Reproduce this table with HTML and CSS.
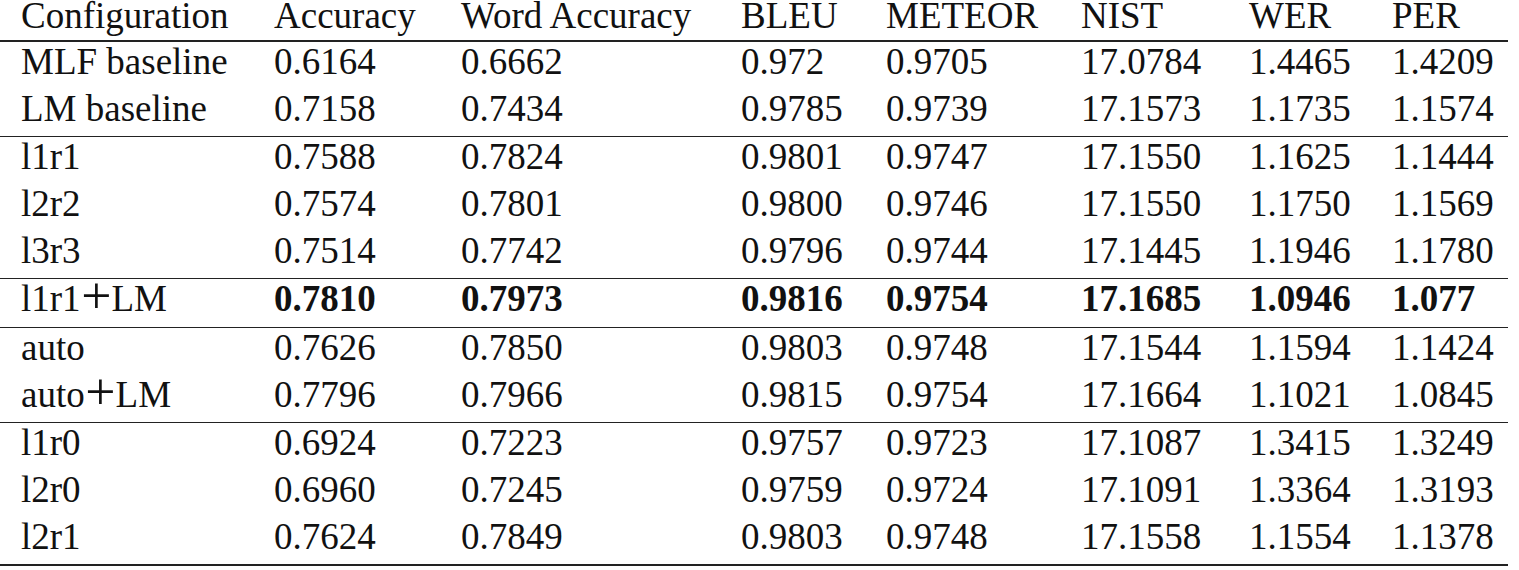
FILE: index.html
```html
<!DOCTYPE html>
<html>
<head>
<meta charset="utf-8">
<link rel="stylesheet" href="styles.css">
</head>
<body>
<table class="results">
  <colgroup>
    <col class="c1"><col class="c2"><col class="c3"><col class="c4"><col class="c5"><col class="c6"><col class="c7"><col class="c8">
  </colgroup>
  <thead>
    <tr class="head"><th>Configuration</th><th>Accuracy</th><th>Word Accuracy</th><th>BLEU</th><th>METEOR</th><th>NIST</th><th>WER</th><th>PER</th></tr>
  </thead>
  <tbody>
    <tr><td>MLF baseline</td><td>0.6164</td><td>0.6662</td><td>0.972</td><td>0.9705</td><td>17.0784</td><td>1.4465</td><td>1.4209</td></tr>
    <tr><td>LM baseline</td><td>0.7158</td><td>0.7434</td><td>0.9785</td><td>0.9739</td><td>17.1573</td><td>1.1735</td><td>1.1574</td></tr>
    <tr class="group"><td>l1r1</td><td>0.7588</td><td>0.7824</td><td>0.9801</td><td>0.9747</td><td>17.1550</td><td>1.1625</td><td>1.1444</td></tr>
    <tr><td>l2r2</td><td>0.7574</td><td>0.7801</td><td>0.9800</td><td>0.9746</td><td>17.1550</td><td>1.1750</td><td>1.1569</td></tr>
    <tr><td>l3r3</td><td>0.7514</td><td>0.7742</td><td>0.9796</td><td>0.9744</td><td>17.1445</td><td>1.1946</td><td>1.1780</td></tr>
    <tr class="group best"><td>l1r1<span class="op">+</span>LM</td><td>0.7810</td><td>0.7973</td><td>0.9816</td><td>0.9754</td><td>17.1685</td><td>1.0946</td><td>1.077</td></tr>
    <tr class="group"><td>auto</td><td>0.7626</td><td>0.7850</td><td>0.9803</td><td>0.9748</td><td>17.1544</td><td>1.1594</td><td>1.1424</td></tr>
    <tr><td>auto<span class="op">+</span>LM</td><td>0.7796</td><td>0.7966</td><td>0.9815</td><td>0.9754</td><td>17.1664</td><td>1.1021</td><td>1.0845</td></tr>
    <tr class="group"><td>l1r0</td><td>0.6924</td><td>0.7223</td><td>0.9757</td><td>0.9723</td><td>17.1087</td><td>1.3415</td><td>1.3249</td></tr>
    <tr><td>l2r0</td><td>0.6960</td><td>0.7245</td><td>0.9759</td><td>0.9724</td><td>17.1091</td><td>1.3364</td><td>1.3193</td></tr>
    <tr class="last"><td>l2r1</td><td>0.7624</td><td>0.7849</td><td>0.9803</td><td>0.9748</td><td>17.1558</td><td>1.1554</td><td>1.1378</td></tr>
  </tbody>
</table>
</body>
</html>
```

FILE: styles.css
```css
html, body {
  margin: 0;
  padding: 0;
  background: #ffffff;
}

.results {
  border-collapse: collapse;
  table-layout: fixed;
  width: 1508px;
  font-family: "Liberation Serif", "Times New Roman", serif;
  font-size: 37px;
  color: #111;
}

.c1 { width: 253px; }
.c2 { width: 187px; }
.c3 { width: 280px; }
.c4 { width: 145px; }
.c5 { width: 195px; }
.c6 { width: 168px; }
.c7 { width: 143px; }
.c8 { width: 137px; }

.results th,
.results td {
  padding: 0 0 0 21px;
  text-align: left;
  white-space: nowrap;
  vertical-align: top;
}

.results th {
  font-weight: normal;
  line-height: 31px;
  padding-bottom: 9px;
}

.head {
  border-bottom: 2px solid #222;
}

.results td {
  line-height: 40px;
  padding-bottom: 7.1px;
}

.op {
  display: inline-block;
  margin: 0 5px;
  font-weight: normal;
  transform-origin: 50% 23px;
  transform: translateY(-2px) scale(1.45);
}

.group {
  border-top: 1px solid #222;
}

.best td + td {
  font-weight: bold;
}

.last {
  border-bottom: 2px solid #222;
}
```
